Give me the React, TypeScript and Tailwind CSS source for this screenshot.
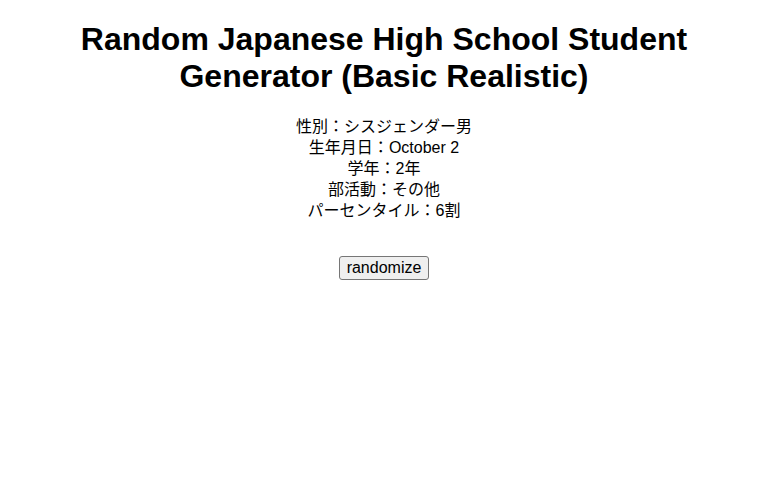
import { useState } from 'react';

type Student = {
  gender: string;
  birthday: string;
  grade: string;
  club: string;
  percentile: string;
};

const genders = ['シスジェンダー男', 'シスジェンダー女', 'トランスジェンダー男', 'トランスジェンダー女', 'ノンバイナリー'];
const months = [
  'January', 'February', 'March', 'April', 'May', 'June',
  'July', 'August', 'September', 'October', 'November', 'December',
];
const clubs = ['運動部', '文化部', '帰宅部', 'その他'];

const pick = <T,>(list: T[]) => list[Math.floor(Math.random() * list.length)];

function makeStudent(): Student {
  return {
    gender: pick(genders),
    birthday: `${pick(months)} ${1 + Math.floor(Math.random() * 28)}`,
    grade: `${1 + Math.floor(Math.random() * 3)}年`,
    club: pick(clubs),
    percentile: `${Math.floor(Math.random() * 10)}割`,
  };
}

export default function App() {
  const [student, setStudent] = useState<Student>({
    gender: 'シスジェンダー男',
    birthday: 'October 2',
    grade: '2年',
    club: 'その他',
    percentile: '6割',
  });

  const rows = [
    ['性別', student.gender],
    ['生年月日', student.birthday],
    ['学年', student.grade],
    ['部活動', student.club],
    ['パーセンタイル', student.percentile],
  ];

  return (
    <div className="min-h-[480px] bg-white text-black text-center font-['Liberation_Sans','Noto_Sans_CJK_JP',sans-serif]">
      <h1 className="pt-[21px] mx-auto text-[32px] leading-[37px] font-bold">
        Random Japanese High School Student
        <br />
        Generator (Basic Realistic)
      </h1>
      <div className="mt-[21px] text-[16px] leading-[21px]">
        {rows.map(([label, value]) => (
          <div key={label}>
            {label}：{value}
          </div>
        ))}
      </div>
      <button
        type="button"
        onClick={() => setStudent(makeStudent())}
        className="mt-[35px] px-[7px] py-[2px] text-[16px] leading-[18px] bg-[#efefef] border border-[#767676] rounded-[3px] text-black"
      >
        randomize
      </button>
    </div>
  );
}
